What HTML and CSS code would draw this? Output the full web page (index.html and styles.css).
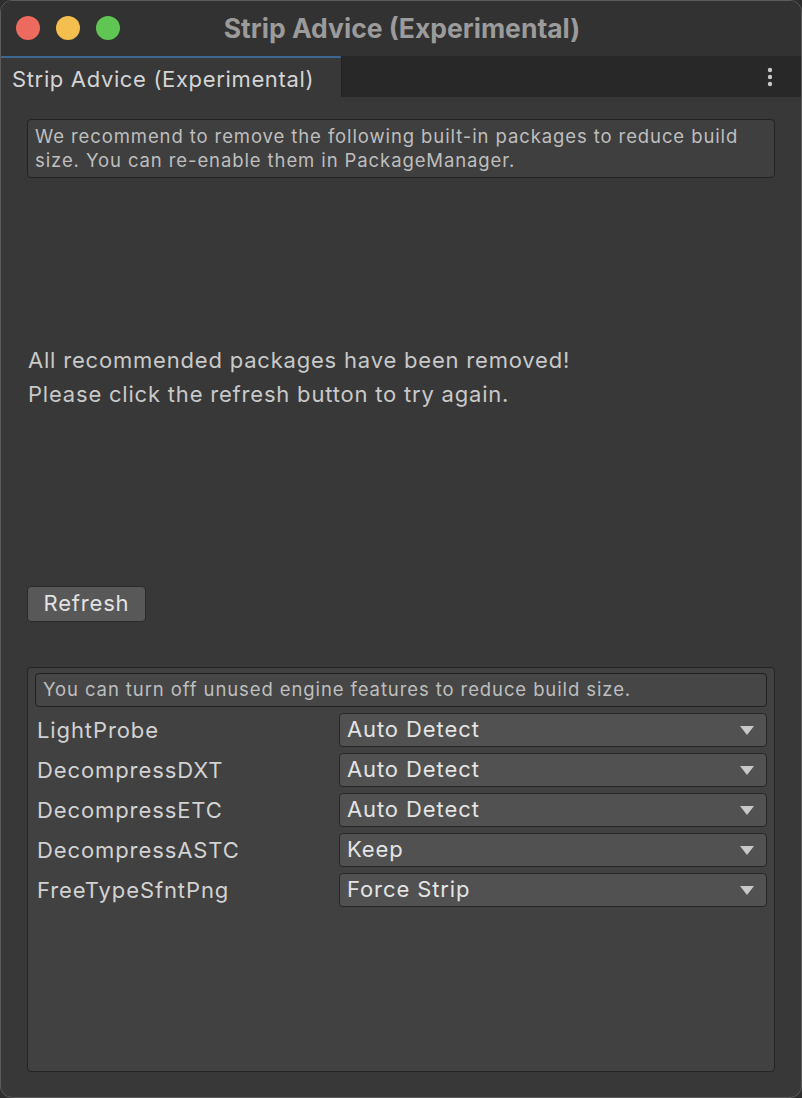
FILE: index.html
```html
<!DOCTYPE html>
<html lang="en">
<head>
    <meta charset="UTF-8">
    <meta name="viewport" content="width=device-width, initial-scale=1.0">
    <title>Strip Advice (Experimental)</title>
    <link rel="stylesheet" href="styles.css">
</head>
<body>
    <div class="window">
        <header class="titlebar">
            <div class="lights">
                <span class="light red"></span>
                <span class="light yellow"></span>
                <span class="light green"></span>
            </div>
            <h1 class="title">Strip Advice (Experimental)</h1>
        </header>
        <div class="tabbar">
            <div class="tab">Strip Advice (Experimental)</div>
            <svg class="kebab" width="6" height="20" viewBox="0 0 6 20">
                <circle cx="3" cy="3" r="2.2" fill="#c8c8c8"/>
                <circle cx="3" cy="10" r="2.2" fill="#c8c8c8"/>
                <circle cx="3" cy="17" r="2.2" fill="#c8c8c8"/>
            </svg>
        </div>
        <div class="content">
            <div class="helpbox">We recommend to remove the following built-in packages to reduce build size. You can re-enable them in PackageManager.</div>
            <div class="message">
                <p>All recommended packages have been removed!</p>
                <p>Please click the refresh button to try again.</p>
            </div>
            <button class="btn" type="button">Refresh</button>
            <div class="panel">
                <div class="helpbox small">You can turn off unused engine features to reduce build size.</div>
                <div class="row">
                    <label>LightProbe</label>
                    <div class="dropdown">Auto Detect<span class="arrow"></span></div>
                </div>
                <div class="row">
                    <label>DecompressDXT</label>
                    <div class="dropdown">Auto Detect<span class="arrow"></span></div>
                </div>
                <div class="row">
                    <label>DecompressETC</label>
                    <div class="dropdown">Auto Detect<span class="arrow"></span></div>
                </div>
                <div class="row">
                    <label>DecompressASTC</label>
                    <div class="dropdown">Keep<span class="arrow"></span></div>
                </div>
                <div class="row">
                    <label>FreeTypeSfntPng</label>
                    <div class="dropdown">Force Strip<span class="arrow"></span></div>
                </div>
            </div>
        </div>
    </div>
</body>
</html>
```

FILE: styles.css
```css
html, body {
    margin: 0;
    height: 100%;
    background-color: #2e2e2e;
}
body {
    font-family: Inter, "Noto Sans", sans-serif;
}
.window {
    box-sizing: border-box;
    height: 100vh;
    display: flex;
    flex-direction: column;
    background-color: #383838;
    border: 1px solid #5c5c5c;
    border-radius: 12px;
    overflow: hidden;
}
.titlebar {
    height: 55px;
    flex: none;
    display: flex;
    align-items: center;
    justify-content: center;
    background-color: #323232;
    position: relative;
}
.lights {
    position: absolute;
    left: 15px;
    top: 15px;
    display: flex;
    gap: 16px;
}
.light {
    width: 24px;
    height: 24px;
    border-radius: 50%;
}
.red { background-color: #ed6a5e; }
.yellow { background-color: #f5bf4f; }
.green { background-color: #61c554; }
.title {
    margin: 0 0 2px;
    font-size: 26.5px;
    font-weight: 700;
    color: #9b9b9b;
    padding-left: 2px;
}
.tabbar {
    height: 41px;
    flex: none;
    display: flex;
    align-items: stretch;
    justify-content: space-between;
    background-color: #282828;
}
.tab {
    box-sizing: border-box;
    width: 342px;
    margin-left: -1px;
    padding: 8px 0 0 12px;
    background-color: #383838;
    border-top: 2px solid #3d6791;
    border-top-right-radius: 3px;
    border-right: 1px solid #222;
    font-size: 22px;
    letter-spacing: 0.65px;
    color: #d4d4d4;
}
.kebab {
    align-self: center;
    margin-right: 28px;
}
.content {
    flex: 1;
    display: flex;
    flex-direction: column;
    align-items: flex-start;
    padding: 22px 26px 25px 26px;
    min-height: 0;
}
.helpbox {
    box-sizing: border-box;
    width: 100%;
    padding: 4px 7px 5px;
    background-color: #3f3f3f;
    border: 1px solid #232323;
    border-radius: 4px;
    font-size: 18.5px;
    line-height: 24px;
    color: #bebebe;
    letter-spacing: 0.9px;
}
.message {
    margin-top: 165px;
    font-size: 22px;
    line-height: 34px;
    letter-spacing: 0.8px;
    color: #c9c9c9;
    padding-left: 1px;
}
.message p {
    margin: 0;
}
.btn {
    margin-top: 175px;
    box-sizing: border-box;
    width: 119px;
    height: 36px;
    padding: 0 0 2px;
    background-color: #585858;
    border: 1px solid #2a2a2a;
    border-radius: 4px;
    font-family: inherit;
    font-size: 22px;
    letter-spacing: 0.8px;
    color: #e2e2e2;
}
.panel {
    box-sizing: border-box;
    margin-top: 45px;
    width: 100%;
    flex: 1;
    display: flex;
    flex-direction: column;
    gap: 6px;
    padding: 5px 7px;
    background-color: #414141;
    border: 1px solid #242424;
    border-radius: 4px;
}
.helpbox.small {
    height: 34px;
    padding: 3px 7px;
    background-color: #464646;
    border-color: #202020;
}
.row {
    display: flex;
    align-items: center;
    height: 34px;
}
.row label {
    width: 302px;
    flex: none;
    padding-left: 2px;
    font-size: 22px;
    letter-spacing: 0.9px;
    color: #d2d2d2;
}
.dropdown {
    box-sizing: border-box;
    flex: 1;
    height: 34px;
    display: flex;
    align-items: center;
    justify-content: space-between;
    padding: 0 12px 2px 7px;
    background-color: #515151;
    border: 1px solid #262626;
    border-radius: 4px;
    font-size: 22px;
    letter-spacing: 0.9px;
    color: #e4e4e4;
}
.arrow {
    width: 0;
    height: 0;
    border-left: 7px solid transparent;
    border-right: 7px solid transparent;
    border-top: 9px solid #c8c8c8;
    margin-top: 2px;
}
```
